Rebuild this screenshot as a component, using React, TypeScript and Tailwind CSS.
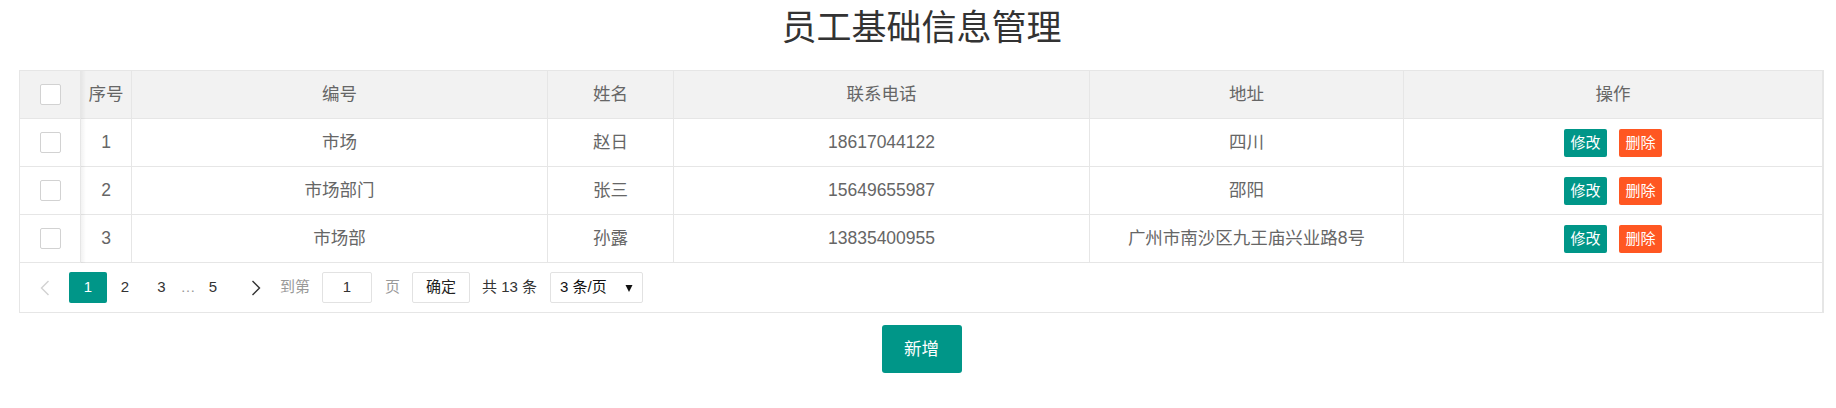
import React from "react";

const rows = [
  { id: 1, code: "市场", name: "赵日", phone: "18617044122", addr: "四川" },
  { id: 2, code: "市场部门", name: "张三", phone: "15649655987", addr: "邵阳" },
  { id: 3, code: "市场部", name: "孙露", phone: "13835400955", addr: "广州市南沙区九王庙兴业路8号" },
];

function Checkbox() {
  return <div className="w-[21px] h-[21px] rounded-[2px] border border-[#d2d2d2] bg-white" />;
}

function Row({ header, children }: { header?: boolean; children: React.ReactNode[] }) {
  const cell = "flex items-center justify-center border-r border-[#e6e6e6] shrink-0";
  return (
    <div className={"flex h-[48px] border-b border-[#e6e6e6] " + (header ? "bg-[#f2f2f2]" : "bg-white")}>
      <div className={cell + " w-[61px]"}>{children[0]}</div>
      <div className={cell + " w-[51px]"}>{children[1]}</div>
      <div className={cell + " w-[416px]"}>{children[2]}</div>
      <div className={cell + " w-[126px]"}>{children[3]}</div>
      <div className={cell + " w-[416px]"}>{children[4]}</div>
      <div className={cell + " w-[314px]"}>{children[5]}</div>
      <div className="flex flex-1 items-center justify-center">{children[6]}</div>
    </div>
  );
}

export default function App() {
  return (
    <div className="w-[1836px] h-[408px] bg-white text-[#666] font-['Liberation_Sans','Noto_Sans_CJK_SC',sans-serif]">
      <div className="pl-[19px] pr-[12px] pt-[10px]">
        <h2 className="mb-[25px] text-center text-[35px] leading-[35px] text-[#333] font-normal">员工基础信息管理</h2>

        <div className="relative border border-[#e6e6e6] border-r-2 text-[17.5px]">
          <Row header>
            {[<Checkbox key="c" />, "序号", "编号", "姓名", "联系电话", "地址", "操作"]}
          </Row>
          {rows.map((r) => (
            <Row key={r.id}>
              {[
                <Checkbox key="c" />,
                String(r.id),
                r.code,
                r.name,
                r.phone,
                r.addr,
                <div key="ops" className="flex gap-[12px]">
                  <button className="h-[28px] w-[43px] rounded-[2px] bg-[#009688] text-[15px] leading-[28px] text-white">修改</button>
                  <button className="h-[28px] w-[43px] rounded-[2px] bg-[#FF5722] text-[15px] leading-[28px] text-white">删除</button>
                </div>,
              ]}
            </Row>
          ))}
          <div className="absolute left-[61px] top-0 h-[192px] w-[5px] bg-linear-to-r from-[rgba(0,0,0,0.05)] to-transparent pointer-events-none" />

          <div className="h-[49px] pt-[9px]">
            <div className="flex h-[31px] items-center text-[15px] text-[#333]">
              <div className="ml-[16px] flex w-[18px] justify-center">
                <svg width="10" height="16" viewBox="0 0 10 16">
                  <polyline points="8.5,1 1.5,8 8.5,15" fill="none" stroke="#d2d2d2" strokeWidth="1.4" />
                </svg>
              </div>
              <div className="ml-[15px] flex h-[31px] w-[38px] items-center justify-center rounded-[2px] bg-[#009688] text-white">1</div>
              <div className="flex w-[36px] justify-center">2</div>
              <div className="flex w-[37px] justify-center">3</div>
              <div className="flex w-[16px] justify-center text-[#999]">…</div>
              <div className="flex w-[34px] justify-center">5</div>
              <div className="ml-[18px] flex w-[16px] justify-center">
                <svg width="10" height="16" viewBox="0 0 10 16">
                  <polyline points="1.5,1 8.5,8 1.5,15" fill="none" stroke="#333" strokeWidth="1.4" />
                </svg>
              </div>
              <span className="ml-[16px] text-[#999]">到第</span>
              <div className="ml-[12px] flex h-[31px] w-[50px] items-center justify-center rounded-[2px] border border-[#e2e2e2] text-[#333]">1</div>
              <span className="ml-[13px] text-[#999]">页</span>
              <div className="ml-[12px] flex h-[31px] w-[58px] items-center justify-center rounded-[2px] border border-[#e2e2e2] text-[#222]">确定</div>
              <span className="ml-[12px] text-[#333]">共 13 条</span>
              <div className="ml-[13px] flex h-[31px] w-[93px] items-center justify-between rounded-[2px] border border-[#e2e2e2] pl-[9px] pr-[9px] text-[#111]">
                <span>3 条/页</span>
                <svg width="8" height="8" viewBox="0 0 8 8">
                  <polygon points="0.5,1 7.5,1 4,8" fill="#111" />
                </svg>
              </div>
            </div>
          </div>
        </div>

        <div className="mt-[12px] flex justify-center">
          <button className="h-[48px] w-[80px] rounded-[3px] bg-[#009688] text-[17.5px] text-white">新增</button>
        </div>
      </div>
    </div>
  );
}
